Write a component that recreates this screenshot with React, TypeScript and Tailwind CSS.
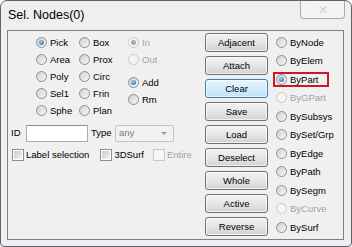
import React from "react";
import clsx from "clsx";

type RadioProps = {
  label: string;
  checked?: boolean;
  disabled?: boolean;
};

const Radio = ({ label, checked, disabled }: RadioProps) => (
  <div className="flex items-center gap-[3px] h-full">
    <span
      className={clsx(
        "w-[11px] h-[11px] rounded-full border flex items-center justify-center shrink-0",
        disabled
          ? "border-[#c9c9c9] bg-[#f4f4f4]"
          : "border-[#8c8e90] bg-linear-to-br from-[#cfd0d1] to-[#f8f8f8]"
      )}
    >
      {checked && (
        <span
          className={clsx(
            "w-[5px] h-[5px] rounded-full",
            disabled
              ? "bg-[#a8a8a8]"
              : "bg-[radial-gradient(circle_at_40%_35%,#9fd0f5,#1b5c99)]"
          )}
        />
      )}
    </span>
    <span className={disabled ? "text-[#a3a3a3]" : "text-black"}>{label}</span>
  </div>
);

const Check = ({ label, disabled }: { label: string; disabled?: boolean }) => (
  <div className="flex items-center gap-[2px]">
    <span
      className={clsx(
        "w-[12px] h-[12px] border p-[1px] shrink-0",
        disabled ? "border-[#c9c9c9] bg-[#f6f6f6]" : "border-[#8c8e90] bg-white"
      )}
    >
      <span
        className={clsx(
          "block w-full h-full",
          disabled ? "bg-[#f6f6f6]" : "bg-linear-to-br from-[#cbcbcb] to-[#f2f2f2]"
        )}
      />
    </span>
    <span className={disabled ? "text-[#a3a3a3]" : "text-black"}>{label}</span>
  </div>
);

const Btn = ({ label, focused }: { label: string; focused?: boolean }) => (
  <div
    className={clsx(
      "w-[63px] h-[19px] rounded-[3px] border flex items-center justify-center",
      focused
        ? "border-[#3c7fb1] bg-linear-to-b from-[#e9f6fd] to-[#bde4f9] shadow-[inset_0_0_0_1px_#ffffffa0]"
        : "border-[#707070] bg-linear-to-b from-[#f3f3f3] via-[#e6e6e6] to-[#d2d2d2] shadow-[inset_0_0_0_1px_#ffffffb0]"
    )}
  >
    {label}
  </div>
);

const leftCol1 = ["Pick", "Area", "Poly", "Sel1", "Sphe"];
const leftCol2 = ["Box", "Prox", "Circ", "Frin", "Plan"];
const buttons = [
  "Adjacent",
  "Attach",
  "Clear",
  "Save",
  "Load",
  "Deselect",
  "Whole",
  "Active",
  "Reverse",
];
const byItems = [
  { label: "ByNode" },
  { label: "ByElem" },
  { label: "ByPart", checked: true, marked: true },
  { label: "ByGPart", disabled: true },
  { label: "BySubsys" },
  { label: "BySet/Grp" },
  { label: "ByEdge" },
  { label: "ByPath" },
  { label: "BySegm" },
  { label: "ByCurve", disabled: true },
  { label: "BySurf" },
];

const App = () => {
  return (
    <div className="w-[352px] h-[247px] bg-white font-['Liberation_Sans',Arial,sans-serif] text-[9.5px] leading-none">
      <div className="w-[352px] h-[247px] border border-[#5f6266] rounded-t-[7px] rounded-b-[4px] bg-[#efefef] flex flex-col">
        {/* title bar */}
        <div className="h-[29px] flex justify-between items-start">
          <span className="pl-[7px] pt-[8px] text-[12.5px] text-black">Sel. Nodes(0)</span>
          <div className="mr-[6px] w-[45px] h-[18px] border border-t-0 border-[#a9abae] rounded-b-[4px] bg-[#f4f4f4] flex items-center justify-center text-[#cfd1d4] text-[12px]">
            ✕
          </div>
        </div>

        {/* client area */}
        <div className="ml-[6px] mr-[7px] h-[210px] border border-[#7d8085] bg-[#f0f0f0] flex">
          {/* left selection options */}
          <div className="w-[197px] pt-[3px] flex flex-col">
            <div className="flex pl-[28px]">
              <div className="w-[43px] flex flex-col">
                {leftCol1.map((l, i) => (
                  <div key={l} className="h-[17px]">
                    <Radio label={l} checked={i === 0} />
                  </div>
                ))}
              </div>
              <div className="w-[49px] flex flex-col">
                {leftCol2.map((l) => (
                  <div key={l} className="h-[17px]">
                    <Radio label={l} />
                  </div>
                ))}
              </div>
              <div className="flex flex-col">
                <div className="h-[17px]">
                  <Radio label="In" checked disabled />
                </div>
                <div className="h-[17px]">
                  <Radio label="Out" disabled />
                </div>
                <div className="h-[17px] mt-[6px]">
                  <Radio label="Add" checked />
                </div>
                <div className="h-[17px]">
                  <Radio label="Rm" />
                </div>
              </div>
            </div>

            <div className="mt-[5px] h-[18px] flex items-center pl-[3px]">
              <span className="w-[15px]">ID</span>
              <div className="w-[62px] h-[17px] border border-[#abadb3] border-t-[#8a8c92] bg-white" />
              <span className="ml-[3px] w-[24px]">Type</span>
              <div className="w-[59px] h-[17px] border border-[#c3c3c3] bg-[#f2f2f2] rounded-[2px] flex items-center justify-between pl-[3px] pr-[6px] text-[#7a7a7a]">
                <span>any</span>
                <span className="w-0 h-0 border-l-[3px] border-r-[3px] border-t-[3px] border-l-transparent border-r-transparent border-t-[#9a9a9a]" />
              </div>
            </div>

            <div className="mt-[7px] flex items-center pl-[4px]">
              <Check label="Label selection" />
              <div className="ml-[11px]">
                <Check label="3DSurf" />
              </div>
              <div className="ml-[9px]">
                <Check label="Entire" disabled />
              </div>
            </div>
          </div>

          {/* action buttons */}
          <div className="pt-[2px] flex flex-col gap-[4px]">
            {buttons.map((b) => (
              <Btn key={b} label={b} focused={b === "Clear"} />
            ))}
          </div>

          {/* pick mode */}
          <div className="ml-[8px] pt-[2px] flex flex-col">
            {byItems.map((it) => (
              <div key={it.label} className="h-[18.5px] relative">
                <Radio label={it.label} checked={it.checked} disabled={it.disabled} />
                {it.marked && (
                  <span className="absolute left-[-3px] top-[2px] w-[56px] h-[15px] border-[2.5px] border-[#c8192b]" />
                )}
              </div>
            ))}
          </div>
        </div>
      </div>
    </div>
  );
};

export default App;
